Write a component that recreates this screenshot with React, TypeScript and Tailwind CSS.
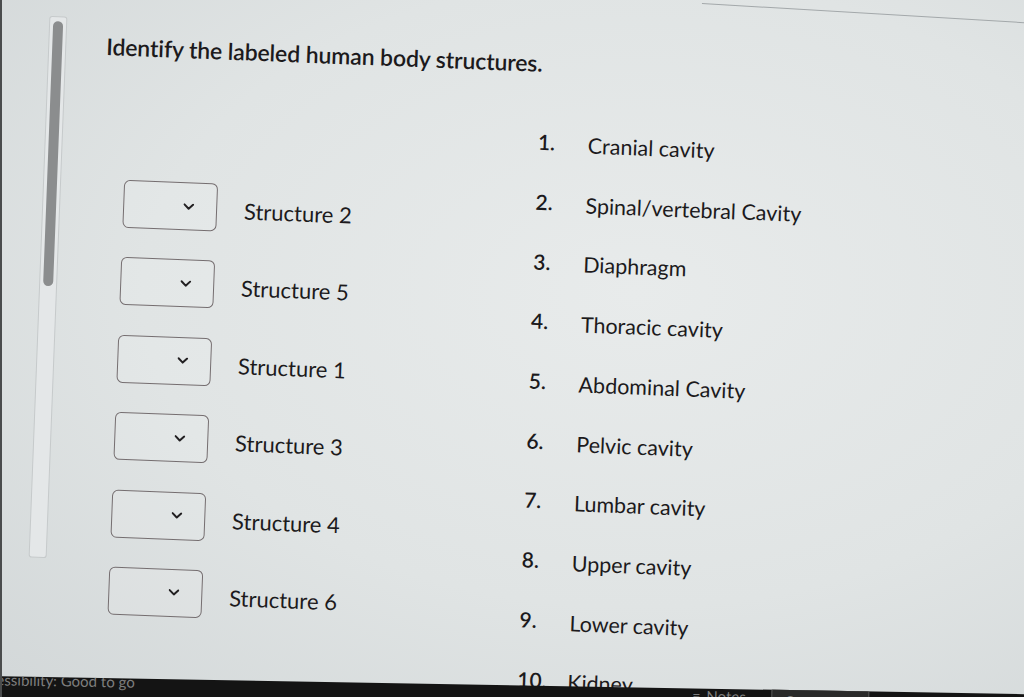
import React from "react";

const structures = [
  "Structure 2",
  "Structure 5",
  "Structure 1",
  "Structure 3",
  "Structure 4",
  "Structure 6",
];

const options = [
  "Cranial cavity",
  "Spinal/vertebral Cavity",
  "Diaphragm",
  "Thoracic cavity",
  "Abdominal Cavity",
  "Pelvic cavity",
  "Lumbar cavity",
  "Upper cavity",
  "Lower cavity",
  "Kidney",
];

function Chevron() {
  return (
    <svg width="11" height="7" viewBox="0 0 11 7" fill="none">
      <path d="M1.2 1.2 L5.5 5.4 L9.8 1.2" stroke="#222022" strokeWidth="2" strokeLinecap="round" strokeLinejoin="round" />
    </svg>
  );
}

function SelectBox() {
  return (
    <div className="flex h-[48px] w-[94px] shrink-0 items-center justify-end rounded-[6px] border-[1.5px] border-[#756e70] bg-white/10 pr-[22px]">
      <Chevron />
    </div>
  );
}

export default function App() {
  return (
    <div
      className="relative h-[697px] w-[1024px] overflow-hidden border-l-2 border-[#4a4c4d] bg-[radial-gradient(ellipse_at_62%_42%,#e8ebeb_0%,#e0e4e4_55%,#d2d7d8_100%)] text-[#1c1a1c]"
      style={{ fontFamily: "Lato, 'Open Sans', sans-serif" }}
    >
      {/* panel edge at the top right */}
      <div className="absolute left-[700px] top-[3px] h-px w-[340px] origin-left rotate-[3.4deg] bg-[#a3a8aa]" />

      <div className="flex origin-top-left rotate-[2.2deg]">
        {/* scrollbar */}
        <div className="pl-[48px] pt-[14px]">
          <div className="h-[542px] w-[18px] rounded-[3px] border border-[#c6cacb] bg-[#e4e7e8] px-[3px] pt-[4px]">
            <div className="h-[265px] w-full rounded-full bg-[#8b8d8e]" />
          </div>
        </div>

        <div className="pl-[40px] pt-[30px]">
          <h1 className="text-[23px] font-semibold leading-[25px] tracking-[-0.1px]">
            Identify the labeled human body structures.
          </h1>

          <div className="flex items-start">
            {/* dropdown column */}
            <div className="ml-[23px] flex w-[412px] flex-col gap-[29.4px] pt-[120px]">
              {structures.map((s) => (
                <div key={s} className="flex h-[48px] items-center">
                  <SelectBox />
                  <span className="ml-[27px] mt-[6px] text-[22px] leading-none">{s}</span>
                </div>
              ))}
            </div>

            {/* answer list */}
            <ol className="pt-[36px]">
              {options.map((o, i) => (
                <li key={o} className="flex h-[59.7px] items-center">
                  <span className="w-[50px] text-[21px] font-semibold leading-none">
                    {i + 1}.
                  </span>
                  <span className="mt-[6px] text-[21.5px] leading-none">{o}</span>
                </li>
              ))}
            </ol>
          </div>
        </div>
      </div>

      {/* bottom toolbar */}
      <div className="absolute left-[-20px] right-[-20px] top-[676px] flex h-[60px] origin-left rotate-[1deg] items-start overflow-hidden bg-[#141414] text-[15px] text-[#7e7e7e]">
        <span className="ml-[-10px] mt-[-8px] w-[720px] whitespace-nowrap">Accessibility: Good to go</span>
        <span className="mt-[-4px] flex items-center gap-[6px] whitespace-nowrap">
          <span className="text-[14px]">≡</span>Notes
        </span>
        <span className="ml-[26px] mt-[-1px] rounded-[2px] border border-[#5a5a5a] bg-[#2a2a2a] px-[12px] text-[#a0a0a0]">
          Comments
        </span>
      </div>
    </div>
  );
}
